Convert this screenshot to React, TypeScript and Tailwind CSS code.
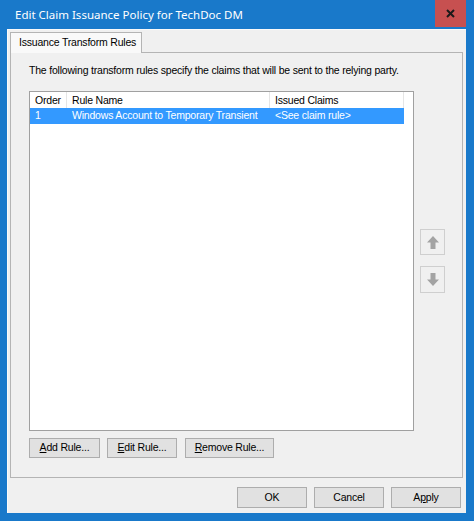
import React from "react";

const ArrowIcon = ({ down = false }: { down?: boolean }) => (
  <svg width="14" height="15" viewBox="0 0 14 15" className={down ? "rotate-180" : ""}>
    <path d="M7 1 L13 7.5 L9.5 7.5 L9.5 14 L4.5 14 L4.5 7.5 L1 7.5 Z" fill="#a3a3a3" />
  </svg>
);

const WinButton = ({
  label,
  mnemonic,
  className,
}: {
  label: string;
  mnemonic?: number;
  className: string;
}) => {
  const idx = mnemonic ?? -1;
  return (
    <button
      className={`flex items-center justify-center whitespace-nowrap border border-[#adadad] bg-[#e1e1e1] text-[10.5px] tracking-[-0.2px] text-black ${className}`}
    >
      {idx >= 0 ? (
        <span>
          {label.slice(0, idx)}
          <span className="underline underline-offset-1">{label[idx]}</span>
          {label.slice(idx + 1)}
        </span>
      ) : (
        label
      )}
    </button>
  );
};

const App = () => {
  return (
    <div
      className="flex h-[521px] w-[474px] flex-col whitespace-nowrap bg-[#1979ca] text-black"
      style={{ fontFamily: '"Liberation Sans", Arial, sans-serif' }}
    >
      {/* title bar */}
      <div className="flex h-[29px] shrink-0 items-start">
        <div className="pl-[15px] pt-[6px] text-[11.5px] text-white" style={{ fontFamily: '"Noto Sans", sans-serif' }}>
          Edit Claim Issuance Policy for TechDoc DM
        </div>
        <div className="ml-auto mr-[8px] flex h-[27px] w-[31px] items-center justify-center bg-[#c75050]">
          <svg width="9" height="9" viewBox="0 0 9 9">
            <path d="M1 1 L8 8 M8 1 L1 8" stroke="#1a1a1a" strokeWidth="2" />
          </svg>
        </div>
      </div>

      {/* dialog body */}
      <div className="mb-[8px] ml-[7px] mr-[8px] flex flex-1 flex-col border-l border-t border-[#fafafa] bg-[#f0f0f0] pl-[2px] pr-[2px] pt-[2px] text-[10.5px] tracking-[-0.2px]">
        {/* tab */}
        <div className="relative z-10 -mb-px flex h-[21px] w-[132px] items-center border border-b-0 border-[#b4b4b4] bg-[#f9f9f9] pl-[8px]">
          Issuance Transform Rules
        </div>

        {/* tab page */}
        <div className="flex h-[426px] w-[453px] flex-col border border-[#b4b4b4] bg-[#f0f0f0] pl-[18px] pt-[10px]">
          <div className="h-[15px] leading-[15px]">
            The following transform rules specify the claims that will be sent to the relying party.
          </div>

          <div className="mt-[13px] flex">
            {/* list view */}
            <div className="flex h-[340px] w-[385px] flex-col border border-[#a0a0a0] bg-white">
              <div className="flex h-[16px] w-[374px] items-center">
                <div className="h-full w-[37px] border-r border-[#e5e5e5] pl-[5px] leading-[16px]">Order</div>
                <div className="h-full w-[203px] border-r border-[#e5e5e5] pl-[5px] leading-[16px]">Rule Name</div>
                <div className="h-full w-[134px] border-r border-[#e5e5e5] pl-[5px] leading-[16px]">Issued Claims</div>
              </div>
              <div className="flex h-[16px] w-[374px] items-center bg-[#3399ff] text-white">
                <div className="w-[37px] pl-[5px]">1</div>
                <div className="w-[203px] pl-[5px]">Windows Account to Temporary Transient</div>
                <div className="w-[134px] pl-[5px]">&lt;See claim rule&gt;</div>
              </div>
            </div>

            {/* move buttons */}
            <div className="ml-[6px] flex flex-col justify-center gap-[11px]">
              <div className="flex h-[26px] w-[25px] items-center justify-center border border-[#cfcfcf]">
                <ArrowIcon />
              </div>
              <div className="flex h-[27px] w-[25px] items-center justify-center border border-[#cfcfcf]">
                <ArrowIcon down />
              </div>
            </div>
          </div>

          <div className="mt-[7px] flex">
            <WinButton label="Add Rule..." mnemonic={0} className="h-[20px] w-[71px]" />
            <WinButton label="Edit Rule..." mnemonic={0} className="ml-[7px] h-[20px] w-[70px]" />
            <WinButton label="Remove Rule..." mnemonic={0} className="ml-[8px] h-[20px] w-[89px]" />
          </div>
        </div>

        {/* dialog buttons */}
        <div className="mt-[9px] flex justify-end pr-[3px]">
          <WinButton label="OK" className="h-[21px] w-[70px]" />
          <WinButton label="Cancel" className="ml-[7px] h-[21px] w-[70px]" />
          <WinButton label="Apply" mnemonic={1} className="ml-[7px] h-[21px] w-[70px]" />
        </div>
      </div>
    </div>
  );
};

export default App;
